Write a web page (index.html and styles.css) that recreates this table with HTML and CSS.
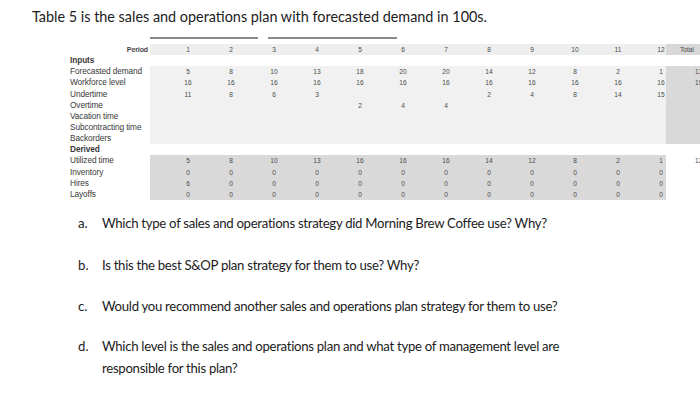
FILE: index.html
```html
<!DOCTYPE html>
<html>
<head>
<meta charset="utf-8">
<link rel="stylesheet" href="styles.css">
</head>
<body>
<div class="page">
  <p class="title">Table 5 is the sales and operations plan with forecasted demand in 100s.</p>
  <div class="sheet">
    <div class="rules"><span class="rule r1"></span><span class="rule r2"></span></div>
    <div class="row period">
      <div class="lab">Period</div>
      <div class="cells"><span>1</span><span>2</span><span>3</span><span>4</span><span>5</span><span>6</span><span>7</span><span>8</span><span>9</span><span>10</span><span>11</span><span>12</span></div>
      <div class="tot">Total</div>
    </div>
    <div class="row head"><div class="lab">Inputs</div></div>
    <div class="row inp">
      <div class="lab">Forecasted demand</div>
      <div class="cells"><span>5</span><span>8</span><span>10</span><span>13</span><span>18</span><span>20</span><span>20</span><span>14</span><span>12</span><span>8</span><span>2</span><span>1</span></div>
      <div class="tot"><span class="tv">131</span></div>
    </div>
    <div class="row inp">
      <div class="lab">Workforce level</div>
      <div class="cells"><span>16</span><span>16</span><span>16</span><span>16</span><span>16</span><span>16</span><span>16</span><span>16</span><span>16</span><span>16</span><span>16</span><span>16</span></div>
      <div class="tot"><span class="tv">192</span></div>
    </div>
    <div class="row inp">
      <div class="lab">Undertime</div>
      <div class="cells"><span>11</span><span>8</span><span>6</span><span>3</span><span></span><span></span><span></span><span>2</span><span>4</span><span>8</span><span>14</span><span>15</span></div>
      <div class="tot"></div>
    </div>
    <div class="row inp">
      <div class="lab">Overtime</div>
      <div class="cells"><span></span><span></span><span></span><span></span><span>2</span><span>4</span><span>4</span><span></span><span></span><span></span><span></span><span></span></div>
      <div class="tot"></div>
    </div>
    <div class="row inp">
      <div class="lab">Vacation time</div>
      <div class="cells"></div>
      <div class="tot"></div>
    </div>
    <div class="row inp">
      <div class="lab">Subcontracting time</div>
      <div class="cells"></div>
      <div class="tot"></div>
    </div>
    <div class="row inp">
      <div class="lab">Backorders</div>
      <div class="cells"></div>
      <div class="tot"></div>
    </div>
    <div class="row head"><div class="lab">Derived</div></div>
    <div class="row der">
      <div class="lab">Utilized time</div>
      <div class="cells"><span>5</span><span>8</span><span>10</span><span>13</span><span>16</span><span>16</span><span>16</span><span>14</span><span>12</span><span>8</span><span>2</span><span>1</span></div>
      <div class="tot"><span class="tv">121</span></div>
    </div>
    <div class="row der">
      <div class="lab">Inventory</div>
      <div class="cells"><span>0</span><span>0</span><span>0</span><span>0</span><span>0</span><span>0</span><span>0</span><span>0</span><span>0</span><span>0</span><span>0</span><span>0</span></div>
      <div class="tot"></div>
    </div>
    <div class="row der">
      <div class="lab">Hires</div>
      <div class="cells"><span>6</span><span>0</span><span>0</span><span>0</span><span>0</span><span>0</span><span>0</span><span>0</span><span>0</span><span>0</span><span>0</span><span>0</span></div>
      <div class="tot"></div>
    </div>
    <div class="row der">
      <div class="lab">Layoffs</div>
      <div class="cells"><span>0</span><span>0</span><span>0</span><span>0</span><span>0</span><span>0</span><span>0</span><span>0</span><span>0</span><span>0</span><span>0</span><span>0</span></div>
      <div class="tot"></div>
    </div>
  </div>
  <ol class="qs">
    <li><span class="mk">a.</span><span class="qt">Which type of sales and operations strategy did Morning Brew Coffee use? Why?</span></li>
    <li><span class="mk">b.</span><span class="qt">Is this the best S&amp;OP plan strategy for them to use? Why?</span></li>
    <li><span class="mk">c.</span><span class="qt">Would you recommend another sales and operations plan strategy for them to use?</span></li>
    <li><span class="mk">d.</span><span class="qt">Which level is the sales and operations plan and what type of management level are responsible for this plan?</span></li>
  </ol>
</div>
</body>
</html>
```

FILE: styles.css
```css
html, body {
  margin: 0;
  padding: 0;
  background: #ffffff;
}
body {
  width: 700px;
  height: 414px;
  overflow: hidden;
}
.page {
  width: 700px;
  font-family: Lato, "Liberation Sans", sans-serif;
  color: #1c1c1c;
}
.title {
  margin: 0;
  padding: 7px 0 0 32px;
  font-size: 14.4px;
  line-height: 20px;
}
.sheet {
  margin-left: 70px;
  font-family: "Liberation Sans", Arial, sans-serif;
}
.rules {
  display: flex;
  height: 17px;
  padding: 10px 0 0 80px;
  box-sizing: border-box;
  gap: 10px;
}
.rule {
  display: block;
  height: 1.5px;
  background: #8a8a8a;
}
.r1 { width: 108px; }
.r2 { width: 129px; }
.row {
  display: flex;
  height: 11.15px;
  align-items: stretch;
}
.lab {
  width: 80px;
  flex: none;
  font-size: 8.3px;
  line-height: 11.15px;
  color: #3a3a3a;
  white-space: nowrap;
  letter-spacing: -0.1px;
}
.period .lab {
  text-align: right;
  padding-right: 2px;
  box-sizing: border-box;
  font-weight: bold;
  font-size: 7px;
  color: #444;
}
.head .lab {
  font-weight: bold;
}
.cells {
  display: flex;
  width: 516px;
  flex: none;
}
.cells span {
  width: 43px;
  flex: none;
  box-sizing: border-box;
  padding-left: 33px;
  text-align: center;
  font-size: 6.6px;
  line-height: 11.15px;
  color: #4a4a4a;
  white-space: nowrap;
}
.tot {
  width: 34px;
  flex: none;
  font-size: 6.6px;
  line-height: 11.15px;
  color: #4a4a4a;
  white-space: nowrap;
  overflow: hidden;
}
.period .cells { background: #eeeeee; }
.period .tot {
  background: #d8d8d8;
  padding-left: 14px;
  box-sizing: border-box;
}
.inp .cells { background: #f1f1f1; }
.inp .tot { background: #d9d9d9; }
.der .cells { background: #d9d9d9; }
.der .tot { background: #ffffff; }
.tv {
  display: inline-block;
  margin-left: 29px;
}
.qs {
  list-style: none;
  margin: 13px 0 0 0;
  padding: 0 0 0 78px;
  font-size: 13.2px;
  letter-spacing: -0.3px;
  line-height: 21.5px;
}
.qs li {
  display: flex;
  margin-bottom: 19px;
}
.qs li:nth-child(1) { margin-bottom: 21px; }
.mk {
  width: 24px;
  flex: none;
  letter-spacing: 0;
}
.qt {
  width: 470px;
}
```
